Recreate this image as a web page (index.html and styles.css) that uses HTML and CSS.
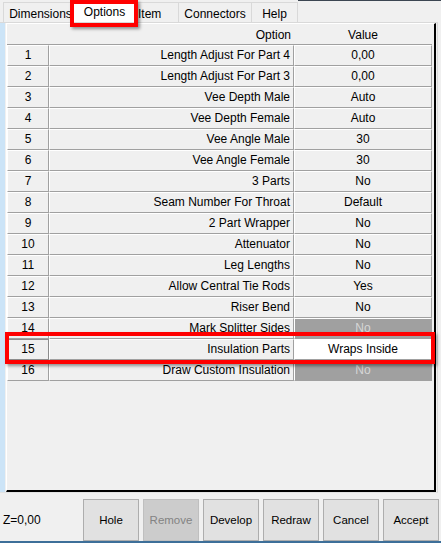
FILE: index.html
```html
<!DOCTYPE html>
<html lang="en">
<head>
    <meta charset="UTF-8">
    <title>Options</title>
    <link rel="stylesheet" href="styles.css">
</head>
<body>
    <div class="window">
        <div class="tabbar">
            <div class="tab t-dim">Dimensions</div>
            <div class="tab t-opt active">Options</div>
            <div class="tab t-item">Item</div>
            <div class="tab t-con">Connectors</div>
            <div class="tab t-help">Help</div>
            <div class="tabfill"></div>
        </div>

        <div class="panel">
            <div class="edge"></div>
            <div class="grid">
                <div class="head">
                    <div></div>
                    <div class="opt">Option</div>
                    <div class="val">Value</div>
                </div>
                <div class="row"><div class="num">1</div><div class="opt">Length Adjust For Part 4</div><div class="val">0,00</div></div>
                <div class="row"><div class="num">2</div><div class="opt">Length Adjust For Part 3</div><div class="val">0,00</div></div>
                <div class="row"><div class="num">3</div><div class="opt">Vee Depth Male</div><div class="val">Auto</div></div>
                <div class="row"><div class="num">4</div><div class="opt">Vee Depth Female</div><div class="val">Auto</div></div>
                <div class="row"><div class="num">5</div><div class="opt">Vee Angle Male</div><div class="val">30</div></div>
                <div class="row"><div class="num">6</div><div class="opt">Vee Angle Female</div><div class="val">30</div></div>
                <div class="row"><div class="num">7</div><div class="opt">3 Parts</div><div class="val">No</div></div>
                <div class="row"><div class="num">8</div><div class="opt">Seam Number For Throat</div><div class="val">Default</div></div>
                <div class="row"><div class="num">9</div><div class="opt">2 Part Wrapper</div><div class="val">No</div></div>
                <div class="row"><div class="num">10</div><div class="opt">Attenuator</div><div class="val">No</div></div>
                <div class="row"><div class="num">11</div><div class="opt">Leg Lengths</div><div class="val">No</div></div>
                <div class="row"><div class="num">12</div><div class="opt">Allow Central Tie Rods</div><div class="val">Yes</div></div>
                <div class="row"><div class="num">13</div><div class="opt">Riser Bend</div><div class="val">No</div></div>
                <div class="row"><div class="num">14</div><div class="opt">Mark Splitter Sides</div><div class="val off">No</div></div>
                <div class="row"><div class="num cur">15</div><div class="opt">Insulation Parts</div><div class="val edit">Wraps Inside</div></div>
                <div class="row"><div class="num">16</div><div class="opt">Draw Custom Insulation</div><div class="val off">No</div></div>
            </div>
        </div>

        <div class="footer">
            <div class="zlabel">Z=0,00</div>
            <button class="btn">Hole</button>
            <button class="btn" disabled>Remove</button>
            <button class="btn">Develop</button>
            <button class="btn">Redraw</button>
            <button class="btn">Cancel</button>
            <button class="btn">Accept</button>
        </div>
        <div class="desk"></div>

        <div class="mark mark-tab"></div>
        <div class="mark mark-row"></div>
    </div>
</body>
</html>
```

FILE: styles.css
```css
body {
    margin: 0;
    background: #f0f0f0;
    font-family: "Liberation Sans", Arial, sans-serif;
    font-size: 12px;
    color: #000;
}
.window {
    position: relative;
    width: 441px;
    height: 543px;
    overflow: hidden;
}

/* tabs */
.tabbar {
    display: flex;
    align-items: flex-end;
    height: 22px;
    padding-left: 3px;
}
.tab {
    height: 20px;
    box-sizing: border-box;
    border-left: 1px solid #d9d9d9;
    border-top: 1px solid #d9d9d9;
    display: flex;
    align-items: center;
    justify-content: center;
    font-size: 12px;
    padding-top: 2px;
}
.tab.active {
    height: 22px;
    background: #fff;
    border-color: #fff;
    padding-top: 0;
}
.t-dim { width: 69px; padding-left: 5px; }
.t-opt { width: 64px; }
.t-item { width: 42px; justify-content: flex-start; padding-left: 1px; }
.t-con { width: 73px; }
.t-help { width: 47px; border-right: 1px solid #d9d9d9; }
.tabfill {
    flex: 1;
    align-self: flex-start;
    border-top: 1px solid #3c4652;
}

/* grid page */
.panel {
    display: flex;
    width: 437px;
    height: 469px;
    border-top: 1px solid #d9d9d9;
    border-right: 1px solid #d9d9d9;
    border-bottom: 1px solid #e3e3e3;
}
.edge {
    width: 5px;
    background: #cce4f7;
}
.grid {
    width: 430px;
    box-sizing: border-box;
    margin: 0 1px;
    border-top: 1px solid #fff;
    border-left: 1px solid #fff;
    border-right: 2px solid #000;
    border-bottom: 2px solid #000;
}
.head, .row {
    display: grid;
    grid-template-columns: 42px 245px 138px;
    width: 425px;
}
.head {
    height: 21px;
    box-sizing: border-box;
    border-bottom: 1px solid #a0a0a0;
    line-height: 23px;
}
.row > div {
    height: 21px;
    box-sizing: border-box;
    border-top: 1px solid #fff;
    border-left: 1px solid #fff;
    border-right: 1px solid #a0a0a0;
    border-bottom: 1px solid #a0a0a0;
    line-height: 19px;
    white-space: nowrap;
}
.num { text-align: center; }
.opt { text-align: right; padding-right: 3px; }
.val { text-align: center; }
.row > .val.off {
    background: #a0a0a0;
    color: #d6d6d6;
}
.row > .val.edit {
    background: #fff;
}
.row > .num.cur {
    border-color: #8c8c8c;
}

/* bottom buttons */
.footer {
    display: flex;
    gap: 4px;
    height: 48px;
    box-sizing: border-box;
    padding-top: 6px;
}
.zlabel {
    width: 79px;
    padding-left: 3px;
    box-sizing: border-box;
    line-height: 42px;
    font-size: 12px;
}
.btn {
    flex-shrink: 0;
    width: 56px;
    height: 42px;
    padding: 0;
    background: #e1e1e1;
    border: 1px solid #adadad;
    font-family: "Liberation Sans", Arial, sans-serif;
    font-size: 11.5px;
    color: #000;
}
.btn:disabled {
    background: #cccccc;
    border-color: #bfbfbf;
    color: #838383;
}
.desk {
    height: 2px;
    background: #3d6f99;
}

/* red callouts */
.mark {
    position: absolute;
    box-sizing: border-box;
    border: 4px solid #ff0000;
    box-shadow: 2px 2px 3px rgba(0, 0, 0, 0.4);
}
.mark-tab {
    left: 70px;
    top: 0;
    width: 68px;
    height: 27px;
}
.mark-row {
    left: 5px;
    top: 332px;
    width: 430px;
    height: 32px;
}
```
